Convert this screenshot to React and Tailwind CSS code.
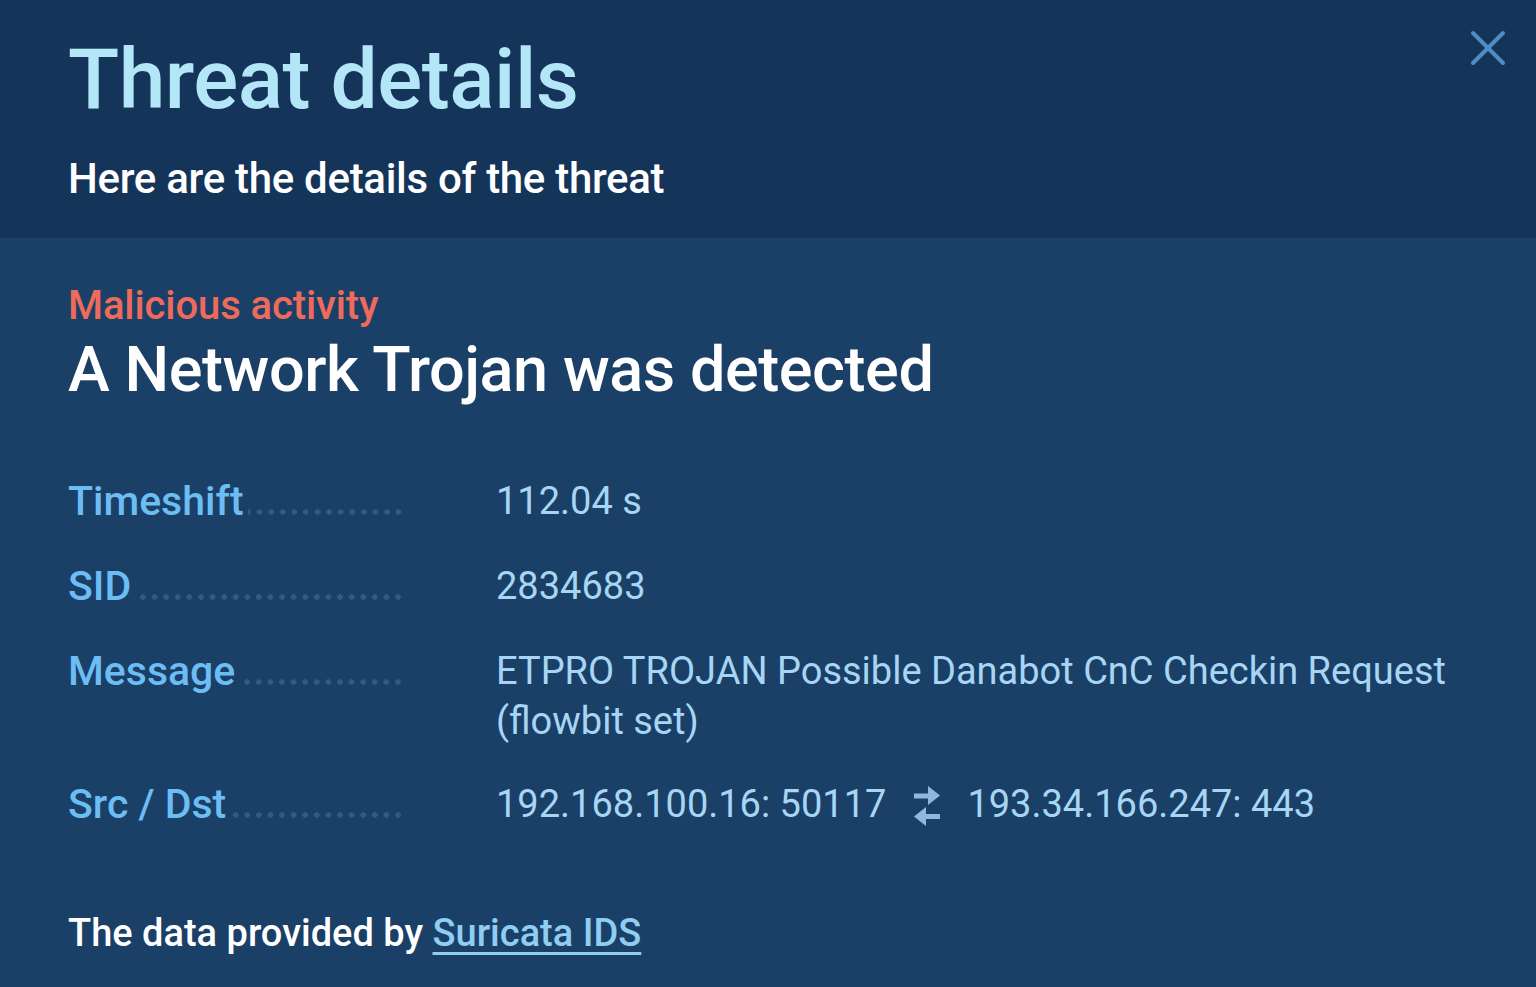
import React from 'react';

const rows = [
  { label: 'Timeshift', value: '112.04 s' },
  { label: 'SID', value: '2834683' },
  { label: 'Message', value: 'ETPRO TROJAN Possible Danabot CnC Checkin Request (flowbit set)' },
];

function SwapIcon() {
  return (
    <svg className="w-[26px] h-[40px] ml-[28px] mr-[27px] mt-[4px]" viewBox="0 0 26 40" fill="#8fb8dc">
      <path d="M0 7.5H14V0L26 9.5L14 19V12.5H0Z" />
      <path d="M26 28H12V21L0 30.5L12 40V33H26Z" />
    </svg>
  );
}

function Label({ children }) {
  return (
    <div className="w-[336px] flex items-end shrink-0">
      <span className="text-[#6cbdf3] font-medium text-[41px] leading-[50px] whitespace-nowrap">{children}</span>
      <span className="flex-1 h-[14px] mb-[7px] ml-[4px] bg-[radial-gradient(circle,#2f5b87_2.5px,transparent_3px)] bg-[length:11.6px_14px] bg-repeat-x bg-right" />
    </div>
  );
}

export default function App() {
  return (
    <div className="w-[1536px] h-[987px] bg-[#1b4067] font-['Roboto',sans-serif] overflow-hidden">
      {/* header */}
      <div className="relative h-[238px] bg-[#15345a] pl-[68px] pt-[30px]">
        <h1 className="text-[#b3e6f7] text-[84px] leading-[100px] font-medium tracking-[-0.5px]">Threat details</h1>
        <p className="mt-[25px] text-white text-[42px] leading-[48px] font-medium tracking-[-0.3px]">Here are the details of the threat</p>
        <button className="absolute right-[30px] top-[30px] w-[36px] h-[36px]">
          <svg viewBox="0 0 36 36" className="w-full h-full" stroke="#4f8cc4" strokeWidth="4" strokeLinecap="round">
            <path d="M3 3L33 33M33 3L3 33" />
          </svg>
        </button>
      </div>

      {/* body */}
      <div className="pl-[68px] pt-[44px]">
        <div className="text-[#ee6a5b] text-[40px] leading-[48px] font-medium tracking-[-0.1px]">Malicious activity</div>
        <div className="mt-[1px] text-white text-[63px] leading-[78px] font-medium tracking-[-0.45px]">A Network Trojan was detected</div>

        <div className="mt-[67px] flex flex-col gap-[35px]">
          {rows.map((r) => (
            <div key={r.label} className="flex items-start">
              <Label>{r.label}</Label>
              <div className="ml-[92px] w-[960px] text-[#a7d6f5] text-[38px] leading-[50px]">{r.value}</div>
            </div>
          ))}
          <div className="flex items-start -mt-[2px]">
            <Label>Src / Dst</Label>
            <div className="ml-[92px] flex items-center text-[#a7d6f5] text-[38px] leading-[50px]">
              <span>192.168.100.16: 50117</span>
              <SwapIcon />
              <span>193.34.166.247: 443</span>
            </div>
          </div>
        </div>

        <p className="mt-[80px] text-white text-[38px] leading-[48px] font-medium">
          The data provided by{' '}
          <a href="#" className="text-[#8fcdf2] underline decoration-[3px] underline-offset-[6px]">Suricata IDS</a>
        </p>
      </div>
    </div>
  );
}
